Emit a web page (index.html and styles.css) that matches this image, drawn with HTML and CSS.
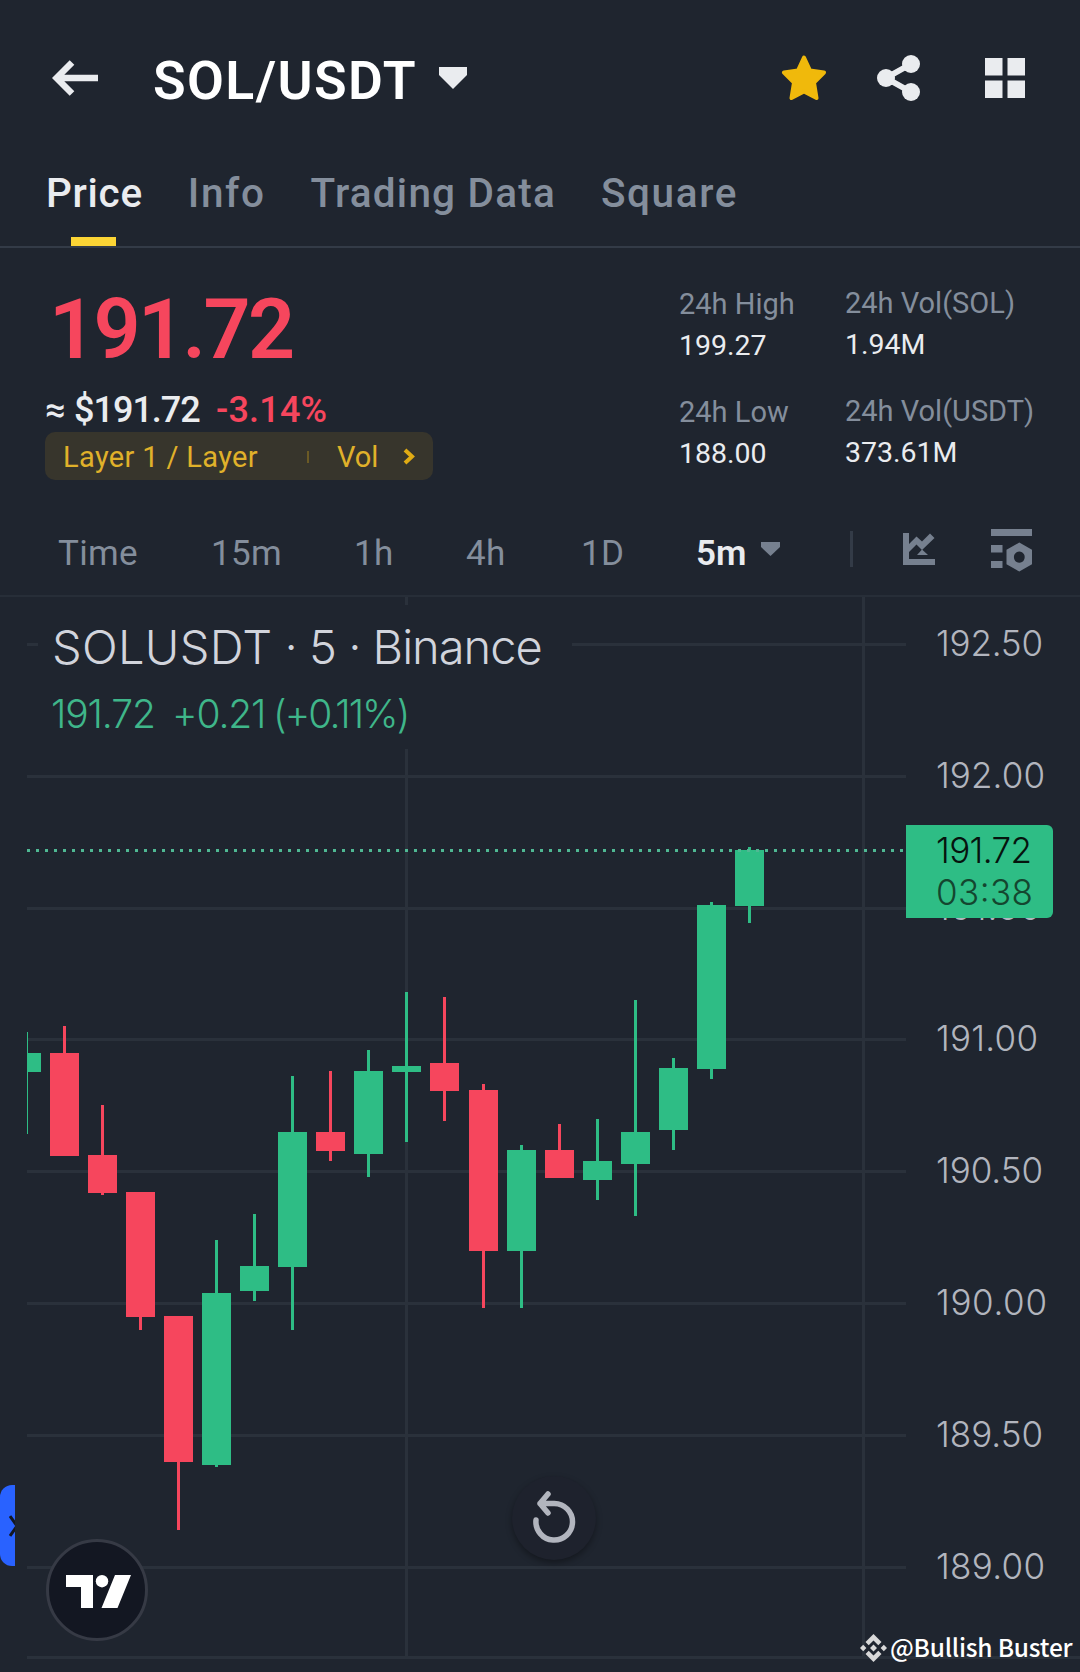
FILE: index.html
```html
<!DOCTYPE html>
<html lang="en">
<head>
    <meta charset="UTF-8">
    <meta name="viewport" content="width=device-width, initial-scale=1.0">
    <title>SOL/USDT</title>
    <link rel="stylesheet" href="styles.css">
</head>
<body>
    <!-- top bar -->
    <header class="top">
        <svg class="back" viewBox="0 0 46 36">
            <path d="M20 2.5 L4.5 18 L20 33.5 M5 18 H46" fill="none" stroke="#eaecef" stroke-width="6.5"/>
        </svg>
        <h1 class="pair">SOL/USDT</h1>
        <svg class="caret" viewBox="0 0 28 22"><path d="M0 0H28V8L14 22L0 8Z" fill="#eaecef"/></svg>
        <div class="actions">
            <svg class="star" viewBox="0 0 46 46">
                <path d="M23 2.5L29 15.5L43 17.5L33 27.5L35.500 43L23 36.500L10.500 43L13 27.500L3 17.500L17 15.500Z" fill="#f0b90b" stroke="#f0b90b" stroke-width="4" stroke-linejoin="round"/>
            </svg>
            <svg class="share" viewBox="0 0 43 46">
                <path d="M34 9L9 23L34 37" fill="none" stroke="#eaecef" stroke-width="6"/>
                <circle cx="34" cy="9" r="9" fill="#eaecef"/>
                <circle cx="9" cy="23" r="9" fill="#eaecef"/>
                <circle cx="34" cy="37" r="9" fill="#eaecef"/>
            </svg>
            <svg class="grid" viewBox="0 0 40 40">
                <path d="M0 0H17.500V17.500H0ZM22.500 0H40V17.500H22.500ZM0 22.500H17.500V40H0ZM22.500 22.500H40V40H22.500Z" fill="#eaecef"/>
            </svg>
        </div>
    </header>

    <!-- tabs -->
    <nav class="tabs">
        <a class="on">Price</a>
        <a>Info</a>
        <a class="long">Trading Data</a>
        <a>Square</a>
    </nav>

    <!-- price summary -->
    <section class="summary">
        <div class="now">
            <div class="price">191.72</div>
            <div class="sub"><span class="approx">≈</span><span class="usd">$191.72</span><span class="down">-3.14%</span></div>
            <div class="tag">
                <span class="layer">Layer 1 / Layer</span>
                <i></i>
                <span class="vol">Vol</span>
                <svg viewBox="0 0 12 17"><path d="M2 2L9 8.500L2 15" fill="none" stroke="#e0ab14" stroke-width="4"/></svg>
            </div>
        </div>
        <div class="stats">
            <dl>
                <dt>24h High</dt>
                <dd>199.27</dd>
                <dt>24h Low</dt>
                <dd>188.00</dd>
            </dl>
            <dl class="vols">
                <dt>24h Vol(SOL)</dt>
                <dd>1.94M</dd>
                <dt>24h Vol(USDT)</dt>
                <dd>373.61M</dd>
            </dl>
        </div>
    </section>

    <!-- intervals -->
    <nav class="times">
        <a>Time</a>
        <a>15m</a>
        <a>1h</a>
        <a>4h</a>
        <a>1D</a>
        <a class="on">5m <svg class="drop" viewBox="0 0 19 14"><path d="M0 0H19V5L9.500 14L0 5Z" fill="#76808f"/></svg></a>
        <i class="bar"></i>
        <svg class="line-icon" viewBox="0 0 32 32">
            <path d="M0 0H6V11L13.500 3.500L19 8.500L27 .5L31.500 5L19 17L13.500 11.500L6 19V26H32V32H0Z" fill="#76808f"/>
            <path d="M14 22L19 16.500L25 22Z" fill="#76808f"/>
        </svg>
        <svg class="set-icon" viewBox="0 0 41 43">
            <path d="M0 0H41V7H0ZM0 16H11.500V23.500H0ZM0 32H11.500V39H0Z" fill="#76808f"/>
            <path fill-rule="evenodd" d="M28.300 13.500L41 20.800V35.300L28.300 42.600L15.500 35.300V20.800ZM28.300 22.500a5.400 5.600 0 1 0 .01 0Z" fill="#76808f"/>
        </svg>
    </nav>

    <!-- chart -->
    <main class="chart">
        <svg id="plot" viewBox="0 597 1080 1075" width="1080" height="1075">
            <g id="lines"></g>
            <g id="candles"></g>
            <path class="now-line" d="M27 850.500H906"/>
            <g id="labels"></g>
            <path d="M906 825H1047a6 6 0 0 1 6 6V912a6 6 0 0 1 -6 6H906Z" fill="#2ebd85"/>
            <text class="axis badge" x="936" y="863" textLength="96">191.72</text>
            <text class="axis badge left" x="936" y="904.500" textLength="97">03:38</text>
        </svg>

        <div class="legend">
            <div class="name"><span class="sym">SOLUSDT</span> · 5 · Binance</div>
            <div class="change"><span class="c1">191.72</span><span class="c2">+0.21</span><span class="c3">(+0.11%)</span></div>
        </div>

        <div class="side"><svg viewBox="0 0 12 22"><path d="M1 1L8 11L1 21" fill="none" stroke="#131722" stroke-width="3"/></svg></div>

        <div class="tv">
            <svg viewBox="0 0 65 33">
                <path d="M0 0H27V33H15V12H0ZM49 0H65L51.500 33H35.500Z" fill="#fff"/>
                <circle cx="36" cy="6.200" r="6.200" fill="#fff"/>
            </svg>
        </div>

        <div class="reset">
            <svg viewBox="0 0 44 54">
                <path d="M4 30A18.300 18.300 0 1 0 22.300 13.500H8M16 4L8 13.500L16 23" fill="none" stroke="#b2b5be" stroke-width="5.500" stroke-linecap="round" stroke-linejoin="round"/>
            </svg>
        </div>

        <div class="mark">
            <svg viewBox="0 0 27 28">
                <path d="M13.500 0L21.500 8L18.300 11.300L13.500 6.500L8.700 11.300L5.500 8ZM13.500 28L5.500 20L8.700 16.700L13.500 21.500L18.300 16.700L21.500 20ZM3.200 10.800L6.400 14L3.200 17.200L0 14ZM23.800 10.800L27 14L23.800 17.200L20.600 14ZM13.500 10.500L17 14L13.500 17.500L10 14Z" fill="#d9d9d9"/>
            </svg>
            <span>@Bullish Buster</span>
        </div>
    </main>

    <script>
        var ns = "http://www.w3.org/2000/svg";

        function add(parent, name, attrs){
            var el = document.createElementNS(ns, name);
            for(var k in attrs) el.setAttribute(k, attrs[k]);
            document.getElementById(parent).appendChild(el);
            return el;
        }

        function rect(parent, cls, x, y, w, h){
            add(parent, "rect", {"class": cls, x: x, y: y, width: w, height: h});
        }

        // price scale: [label, y of the grid line, label width]
        var scale = [
            ["192.50", 644, 107], ["192.00", 776, 109], ["191.50", 908, 105],
            ["191.00", 1039, 102], ["190.50", 1171, 107], ["190.00", 1303, 111],
            ["189.50", 1435, 107], ["189.00", 1567, 109]
        ];
        scale.forEach(function(s, i){
            if(i == 0){
                // broken where the legend sits
                rect("lines", "ln", 27, s[1]-1, 11, 3);
                rect("lines", "ln", 572, s[1]-1, 334, 3);
            }else{
                rect("lines", "ln", 27, s[1]-1, 879, 3);
            }
            var t = add("labels", "text", {"class": "axis", x: 936, y: s[1]+12, textLength: s[2]});
            t.textContent = s[0];
        });
        rect("lines", "ln", 27, 1656, 1053, 3);
        rect("lines", "ln", 405, 597, 3, 8);
        rect("lines", "ln", 405, 749, 3, 907);
        rect("lines", "ln", 862, 597, 3, 1059);

        // candles: [left, high, body top, body bottom, low, up/down]
        var data = [
            [50, 1026, 1053, 1156, 1156, "dn"], [88, 1105, 1155, 1193, 1195, "dn"],
            [126, 1192, 1192, 1317, 1330, "dn"], [164, 1316, 1316, 1462, 1530, "dn"],
            [202, 1240, 1293, 1465, 1467, "up"], [240, 1214, 1266, 1291, 1301, "up"],
            [278, 1076, 1132, 1267, 1330, "up"], [316, 1071, 1132, 1151, 1161, "dn"],
            [354, 1050, 1071, 1154, 1177, "up"], [392, 992, 1066, 1072, 1142, "up"],
            [430, 997, 1063, 1091, 1121, "dn"], [469, 1084, 1090, 1251, 1308, "dn"],
            [507, 1145, 1150, 1251, 1308, "up"], [545, 1124, 1150, 1178, 1178, "dn"],
            [583, 1119, 1161, 1180, 1200, "up"], [621, 1000, 1132, 1164, 1216, "up"],
            [659, 1058, 1068, 1130, 1150, "up"], [697, 902, 905, 1069, 1079, "up"],
            [735, 847, 850, 906, 923, "up"]
        ];
        // first candle is cut by the chart edge
        rect("candles", "up", 27, 1032, 1, 102);
        rect("candles", "up", 27, 1053, 14, 19);
        data.forEach(function(c){
            rect("candles", c[5], c[0]+13, c[1], 3, c[4]-c[1]);
            rect("candles", c[5], c[0], c[2], 29, c[3]-c[2]);
        });
    </script>
</body>
</html>
```
FILE: styles.css
```css
*{
    box-sizing: border-box;
}
body{
    margin: 0;
    width: 1080px;
    height: 1672px;
    overflow: hidden;
    background: #1f252f;
    color: #eaecef;
    font-family: Roboto, "Liberation Sans", sans-serif;
}
svg{
    display: block;
    flex: none;
}

/* top bar */
.top{
    display: flex;
    align-items: center;
    height: 158px;
    padding: 0 55px 2px 52px;
}
.back{
    width: 46px;
    height: 36px;
}
.pair{
    margin: 5px 0 0 55px;
    width: 286px;
    color: #fff;
    font-size: 53.5px;
    font-weight: 600;
    line-height: 64px;
    letter-spacing: 1.4px;
}
.caret{
    width: 28px;
    height: 22px;
}
.actions{
    display: flex;
    align-items: center;
    margin-left: auto;
}
.star{
    width: 46px;
    height: 46px;
    margin-right: 50px;
}
.share{
    width: 43px;
    height: 46px;
    margin-right: 65px;
}
.grid{
    width: 40px;
    height: 40px;
}

/* tabs */
.tabs{
    display: flex;
    gap: 45px;
    height: 90px;
    padding-left: 46px;
    border-bottom: 2px solid #333b47;
    color: #848e9c;
    font-size: 40.5px;
    font-weight: 500;
    line-height: 71px;
    letter-spacing: 1.6px;
}
.tabs .long{
    letter-spacing: 1.2px;
}
.tabs .on{
    position: relative;
    color: #eaecef;
    letter-spacing: .7px;
}
.tabs .on::after{
    content: "";
    position: absolute;
    left: 25px;
    bottom: 0;
    width: 45px;
    height: 9px;
    background: #fcd535;
}

/* price summary */
.summary{
    display: flex;
    height: 262px;
    padding: 35px 0 0 45px;
}
.now{
    width: 634px;
    padding-top: 6px;
}
.price{
    margin-bottom: 17px;
    padding-left: 4px;
    color: #f6465d;
    font-size: 82.5px;
    font-weight: 600;
    line-height: 82px;
    letter-spacing: -2.6px;
}
.sub{
    display: flex;
    font-size: 36px;
    font-weight: 500;
    line-height: 44px;
}
.approx{
    width: 29px;
}
.usd{
    width: 142px;
    letter-spacing: -1px;
}
.down{
    color: #f6465d;
    letter-spacing: .2px;
}
.tag{
    display: flex;
    align-items: center;
    width: 388px;
    height: 48px;
    padding: 1px 0 0 18px;
    border-radius: 10px;
    background: #37352c;
    color: #e0b12a;
    font-size: 29px;
}
.tag .layer{
    width: 244px;
    letter-spacing: .35px;
}
.tag i{
    width: 2px;
    height: 12px;
    margin-right: 28px;
    background: #6b5a25;
}
.tag .vol{
    width: 66px;
}
.tag svg{
    width: 12px;
    height: 17px;
}
.stats{
    display: flex;
}
.stats dl{
    width: 166px;
    margin: 0;
    font-size: 29px;
    line-height: 42px;
    white-space: nowrap;
}
.stats .vols{
    margin-top: -1px;
}
.stats dt{
    color: #848e9c;
}
.stats dd{
    margin: 0 0 24px;
    font-size: 28.5px;
}

/* intervals */
.times{
    display: flex;
    align-items: center;
    height: 87px;
    padding: 1px 0 0 58px;
    border-bottom: 2px solid #272e38;
    color: #848e9c;
    font-size: 35px;
    letter-spacing: .3px;
}
.times a:nth-child(1){ width: 153px; }
.times a:nth-child(2){ width: 143px; }
.times a:nth-child(3){ width: 112px; }
.times a:nth-child(4){ width: 115px; }
.times a:nth-child(5){ width: 115px; }
.times .on{
    display: flex;
    align-items: center;
    width: 155px;
    color: #eaecef;
    font-weight: 600;
    letter-spacing: 0;
}
.drop{
    width: 19px;
    height: 14px;
    margin: -9px 0 0 15px;
}
.bar{
    width: 3px;
    height: 36px;
    margin: -8px 50px 0 -1px;
    background: #333b47;
}
.line-icon{
    width: 32px;
    height: 32px;
    margin: -8px 56px 0 0;
}
.set-icon{
    width: 41px;
    height: 43px;
    margin-top: -6px;
}

/* chart */
.chart{
    position: relative;
    height: 1075px;
}
.ln{
    fill: #2a313b;
}
.up{
    fill: #2ebd85;
}
.dn{
    fill: #f6465d;
}
.now-line{
    stroke: #4fb893;
    stroke-width: 3;
    stroke-dasharray: 3 6;
}
.axis{
    fill: #b2b5be;
    font-family: Inter, "Liberation Sans", sans-serif;
    font-size: 35px;
    font-weight: 300;
}
.badge{
    fill: #06140e;
}
.badge.left{
    fill: #14462f;
}
.legend{
    position: absolute;
    left: 52px;
    top: 20px;
    font-family: Inter, "Liberation Sans", sans-serif;
    font-weight: 300;
    white-space: nowrap;
}
.name{
    color: #d1d4dc;
    font-size: 47px;
    line-height: 59px;
    letter-spacing: -1px;
}
.sym{
    letter-spacing: .3px;
}
.change{
    display: flex;
    margin: 10px 0 0 -1px;
    color: #3fb68a;
    font-size: 39px;
    line-height: 56px;
    letter-spacing: -1.1px;
}
.c1{
    width: 121px;
}
.c2{
    width: 101px;
}
.c3{
    letter-spacing: -1.9px;
}
.side{
    position: absolute;
    left: 0;
    top: 888px;
    width: 15px;
    height: 81px;
    overflow: hidden;
    border-radius: 12px 0 0 12px;
    background: #2962ff;
}
.side svg{
    width: 12px;
    height: 22px;
    margin: 30px 0 0 9px;
}
.tv{
    position: absolute;
    left: 46px;
    top: 942px;
    display: flex;
    width: 102px;
    height: 102px;
    padding: 33px 0 0 17px;
    border: 3px solid #363a45;
    border-radius: 50%;
    background: #131722;
}
.tv svg{
    width: 65px;
    height: 33px;
}
.reset{
    position: absolute;
    left: 512px;
    top: 879px;
    width: 84px;
    height: 84px;
    padding: 14px 0 0 20px;
    border-radius: 50%;
    background: #1e222d;
    box-shadow: 0 3px 6px rgba(0,0,0,.35);
}
.reset svg{
    width: 44px;
    height: 54px;
}
.mark{
    position: absolute;
    left: 860px;
    top: 1031px;
    display: flex;
    align-items: center;
    height: 40px;
    color: #fff;
    font: 500 24.5px/38px "Noto Sans CJK SC", sans-serif;
    letter-spacing: -.2px;
    white-space: nowrap;
}
.mark svg{
    width: 27px;
    height: 28px;
    margin-right: 3px;
}
.mark span{
    margin-top: -2px;
}
```
